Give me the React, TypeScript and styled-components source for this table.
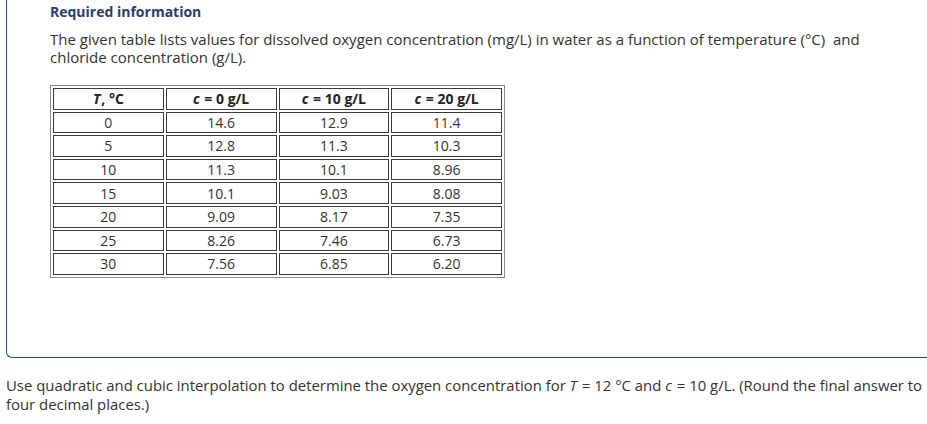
import React from 'react';
import styled, { createGlobalStyle } from 'styled-components';

const GlobalStyle = createGlobalStyle`
  body {
    margin: 0;
    background: #ffffff;
    font-family: "Open Sans", Lato, sans-serif;
    color: #333333;
  }
`;

const Page = styled.div`
  width: 927px;
  height: 424px;
  overflow: hidden;
`;

const InfoPanel = styled.section`
  margin-left: 6px;
  width: 940px;
  height: 358px;
  box-sizing: border-box;
  border-left: 1.5px solid #1e4d8c;
  border-bottom: 1.5px solid #1e4d8c;
  border-bottom-left-radius: 6px;
  padding: 3px 0 0 43px;
`;

const Title = styled.h2`
  margin: 0;
  font-size: 14px;
  font-weight: 700;
  color: #2b3d6b;
  line-height: 18px;
`;

const Intro = styled.p`
  margin: 9px 0 0;
  width: 830px;
  font-size: 15px;
  line-height: 18px;
`;

const DataTable = styled.table`
  margin-top: 19px;
  border: 1px solid #8a8a8a;
  border-spacing: 2px;
  width: 455px;
  table-layout: fixed;
`;

const Cell = styled.td<{ $head?: boolean }>`
  border: 1px solid #3a3a3a;
  height: 19.6px;
  padding: 0;
  text-align: center;
  font-size: 14px;
  font-weight: ${(p) => (p.$head ? 700 : 400)};
  color: ${(p) => (p.$head ? '#222' : '#333')};
`;

const Question = styled.p`
  margin: 18px 0 0 6px;
  width: 918px;
  font-size: 14.9px;
  line-height: 19px;
`;

const Var = styled.i`
  margin-right: 1px;
`;

const heads = ['c = 0 g/L', 'c = 10 g/L', 'c = 20 g/L'];

const rows: string[][] = [
  ['0', '14.6', '12.9', '11.4'],
  ['5', '12.8', '11.3', '10.3'],
  ['10', '11.3', '10.1', '8.96'],
  ['15', '10.1', '9.03', '8.08'],
  ['20', '9.09', '8.17', '7.35'],
  ['25', '8.26', '7.46', '6.73'],
  ['30', '7.56', '6.85', '6.20'],
];

const App = () => {
  return (
    <Page>
      <GlobalStyle />
      <InfoPanel>
        <Title>Required information</Title>
        <Intro>
          The given table lists values for dissolved oxygen concentration (mg/L) in water as a function of
          temperature (°C)&nbsp; and chloride concentration (g/L).
        </Intro>
        <DataTable>
          <tbody>
            <tr>
              <Cell $head>
                <Var>T</Var>, °C
              </Cell>
              {heads.map((h) => (
                <Cell $head key={h}>
                  <Var>c</Var>
                  {h.slice(1)}
                </Cell>
              ))}
            </tr>
            {rows.map((r) => (
              <tr key={r[0]}>
                {r.map((v, i) => (
                  <Cell key={i}>{v}</Cell>
                ))}
              </tr>
            ))}
          </tbody>
        </DataTable>
      </InfoPanel>
      <Question>
        Use quadratic and cubic interpolation to determine the oxygen concentration for <Var>T</Var>&nbsp;=&nbsp;12 °C
        and <Var>c</Var>&nbsp;=&nbsp;10 g/L. (Round the final answer to four decimal places.)
      </Question>
    </Page>
  );
};

export default App;
